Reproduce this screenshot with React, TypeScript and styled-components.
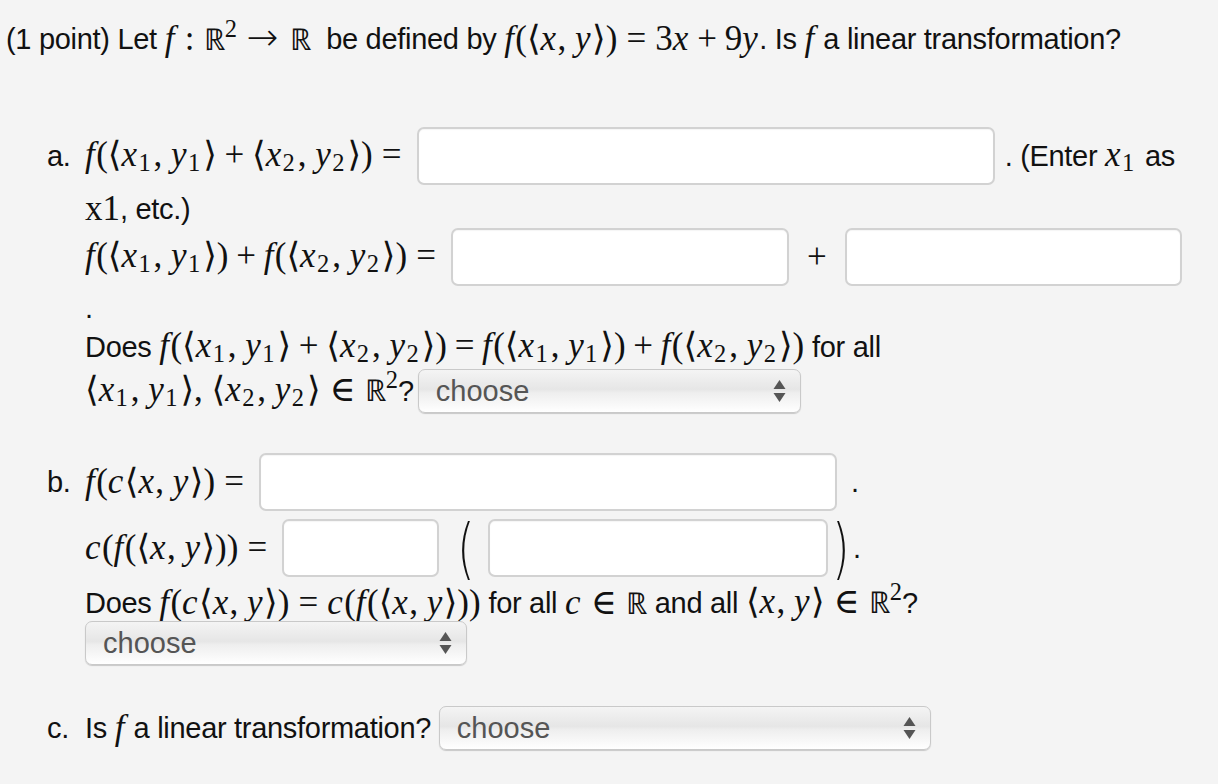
import * as React from 'react';
import styled, { createGlobalStyle } from 'styled-components';

const GlobalStyle = createGlobalStyle`
  html, body {
    margin: 0;
    padding: 0;
    background: #f4f4f4;
  }
  body {
    font-family: "Liberation Sans", Arial, sans-serif;
    color: #111;
  }
`;

const Page = styled.div`
  width: 1218px;
  height: 784px;
  box-sizing: border-box;
  padding: 24px 0 0 6px;
  font-size: 29px;
  line-height: 32px;
  letter-spacing: -0.3px;
  background: #f4f4f4;
  overflow: hidden;
`;

const Part = styled.div<{ $mt: number }>`
  margin-top: ${(p) => p.$mt}px;
  padding-left: 41px;
`;

const Row = styled.div<{ $mt?: number; $indent?: boolean; $h?: number }>`
  display: flex;
  align-items: center;
  white-space: pre;
  margin-top: ${(p) => p.$mt || 0}px;
  padding-left: ${(p) => (p.$indent ? 38 : 0)}px;
  height: ${(p) => p.$h || 30}px;
`;

const Label = styled.span`
  display: inline-block;
  width: 38px;
`;

const Math = styled.span`
  font-family: "Liberation Serif", "DejaVu Serif", serif;
  font-size: 35px;
  letter-spacing: 0;
  white-space: pre;
`;

const V = styled.i`
  font-style: italic;
  margin-right: 0.04em;
`;

const Sub = styled.span`
  font-size: 0.7em;
  position: relative;
  top: 0.22em;
  margin-right: 0.12em;
`;

const Sup = styled.span`
  font-size: 0.7em;
  position: relative;
  top: -0.5em;
`;

const Bb = styled.span`
  font-family: "DejaVu Sans", sans-serif;
  font-size: 30px;
  font-weight: 300;
`;

// operator with tex-like spacing: $rel for =, ∈, :; otherwise binary
const Op = styled.span<{ $rel?: boolean; $tight?: boolean }>`
  display: inline-block;
  margin: 0 ${(p) => (p.$tight ? 0.12 : p.$rel ? 0.26 : 0.22)}em;
`;

const Arrow = styled.span`
  font-family: "DejaVu Sans", sans-serif;
  font-size: 38px;
  font-weight: 300;
  display: inline-block;
  margin: 0 0.3em 0 0.25em;
`;

const Field = styled.div<{ $w: number; $ml?: number; $mr?: number }>`
  width: ${(p) => p.$w}px;
  height: 58px;
  box-sizing: border-box;
  margin-left: ${(p) => p.$ml ?? 12}px;
  margin-right: ${(p) => p.$mr ?? 10}px;
  background: #fff;
  border: 2px solid #d2d2d2;
  border-radius: 7px;
  box-shadow: inset 0 1px 1px rgba(0, 0, 0, 0.04);
  flex-shrink: 0;
`;

const Choice = styled.div<{ $w: number; $ml?: number }>`
  width: ${(p) => p.$w}px;
  height: 44px;
  box-sizing: border-box;
  margin-left: ${(p) => p.$ml ?? 0}px;
  display: flex;
  align-items: center;
  justify-content: space-between;
  padding: 0 14px 0 17px;
  border: 1px solid #c9c9c9;
  border-radius: 7px;
  background: linear-gradient(to bottom, #f4f4f4 0%, #e6e6e6 46%, #eeeeee 54%, #ffffff 100%);
  box-shadow: 0 1px 1px rgba(0, 0, 0, 0.18);
  color: #555;
  font-size: 29px;
  letter-spacing: 0;
  flex-shrink: 0;
`;

const BigParen = styled.span`
  font-family: "DejaVu Sans", sans-serif;
  font-size: 44px;
  font-weight: 200;
  display: inline-block;
  transform: scaleY(1.5);
  margin-right: 4px;
`;

const Arrows = () => (
  <svg width="13" height="24" viewBox="0 0 13 24">
    <path d="M6.5 1 L12.5 10 L0.5 10 Z" fill="#555" />
    <path d="M0.5 14 L12.5 14 L6.5 23 Z" fill="#555" />
  </svg>
);

const Select = ({ w, ml }: { w: number; ml?: number }) => (
  <Choice $w={w} $ml={ml}>
    <span>choose</span>
    <Arrows />
  </Choice>
);

// ⟨x_n, y_n⟩
const Vec = ({ n }: { n: number }) => (
  <>
    ⟨<V>x</V>
    <Sub>{n}</Sub>, <V>y</V>
    <Sub>{n}</Sub>⟩
  </>
);

const XY = () => (
  <>
    ⟨<V>x</V>, <V>y</V>⟩
  </>
);

const F = () => <V>f</V>;

export default function App() {
  return (
    <Page>
      <GlobalStyle />
      <Row>
        <span>(1 point) Let </span>
        <Math>
          <F />
          <Op $rel>:</Op>
          <Bb>ℝ</Bb>
          <Sup>2</Sup>
          <Arrow>→</Arrow>
          <Bb>ℝ</Bb>
        </Math>
        <span>  be defined by </span>
        <Math>
          <F />(<XY />)<Op $rel>=</Op>3<V>x</V>
          <Op>+</Op>9<V>y</V>
        </Math>
        <span>. Is </span>
        <Math>
          <F />
        </Math>
        <span> a linear transformation?</span>
      </Row>

      <Part $mt={73}>
        <Row $h={58}>
          <Label>a.</Label>
          <Math>
            <F />(<Vec n={1} />
            <Op>+</Op>
            <Vec n={2} />)<Op $rel>=</Op>
          </Math>
          <Field $w={578} $ml={6} />
          <span>. (Enter </span>
          <Math>
            <V>x</V>
            <Sub>1</Sub>
          </Math>
          <span> as</span>
        </Row>
        <Row $indent $mt={9}>
          <Math>x1</Math>
          <span>, etc.)</span>
        </Row>
        <Row $indent $mt={4} $h={58}>
          <Math>
            <F />(<Vec n={1} />)<Op>+</Op>
            <F />(<Vec n={2} />)<Op $rel>=</Op>
          </Math>
          <Field $w={338} $ml={6} $mr={18} />
          <Math>+</Math>
          <Field $w={337} $ml={18} />
        </Row>
        <Row $indent $mt={7}>
          <span>.</span>
        </Row>
        <Row $indent $mt={9}>
          <span>Does </span>
          <Math>
            <F />(<Vec n={1} />
            <Op>+</Op>
            <Vec n={2} />)<Op>=</Op>
            <F />(<Vec n={1} />)<Op>+</Op>
            <F />(<Vec n={2} />)
          </Math>
          <span> for all</span>
        </Row>
        <Row $indent $mt={7} $h={44}>
          <Math>
            <Vec n={1} />, <Vec n={2} />
            <Op $rel>∈</Op>
            <Bb>ℝ</Bb>
            <Sup>2</Sup>
          </Math>
          <span>?</span>
          <Select w={383} ml={4} />
        </Row>
      </Part>

      <Part $mt={40}>
        <Row $h={58}>
          <Label>b.</Label>
          <Math>
            <F />(<V>c</V>
            <XY />)<Op $rel>=</Op>
          </Math>
          <Field $w={578} $ml={6} $mr={14} />
          <span>.</span>
        </Row>
        <Row $indent $mt={8} $h={58}>
          <Math>
            <V>c</V>(<F />(<XY />))<Op $rel>=</Op>
          </Math>
          <Field $w={157} $ml={6} $mr={18} />
          <BigParen>(</BigParen>
          <Field $w={340} $ml={10} $mr={4} />
          <BigParen>)</BigParen>
          <span>.</span>
        </Row>
        <Row $indent $mt={11}>
          <span>Does </span>
          <Math>
            <F />(<V>c</V>
            <XY />)<Op $rel>=</Op>
            <V>c</V>(<F />(<XY />))
          </Math>
          <span> for all </span>
          <Math>
            <V>c</V>
            <Op $rel>∈</Op>
            <Bb>ℝ</Bb>
          </Math>
          <span> and all </span>
          <Math>
            <XY />
            <Op $rel>∈</Op>
            <Bb>ℝ</Bb>
            <Sup>2</Sup>
          </Math>
          <span>?</span>
        </Row>
        <Row $indent $mt={3} $h={44}>
          <Select w={382} />
        </Row>
      </Part>

      <Part $mt={41}>
        <Row $h={44}>
          <Label>c.</Label>
          <span>Is </span>
          <Math>
            <F />
          </Math>
          <span> a linear transformation? </span>
          <Select w={492} />
        </Row>
      </Part>
    </Page>
  );
}
